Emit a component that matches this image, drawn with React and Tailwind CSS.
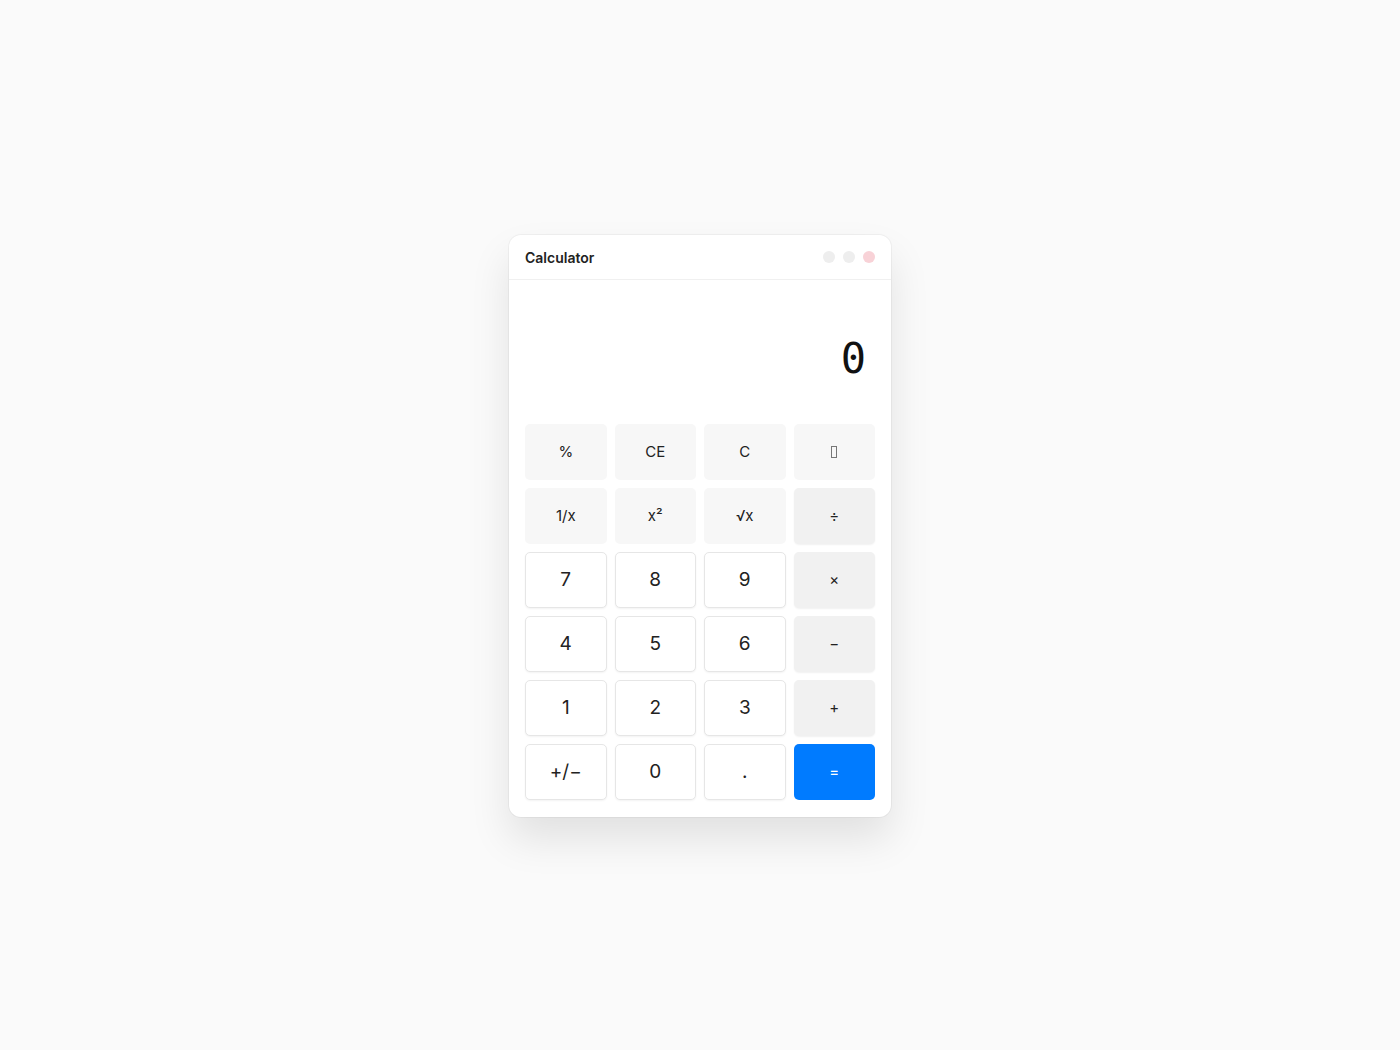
import React from "react";

// Calculator window: title bar, display, 6x4 keypad.
const KEYS = [
  { label: "%", kind: "fn" },
  { label: "CE", kind: "fn" },
  { label: "C", kind: "fn" },
  { label: "back", kind: "fn" },
  { label: "1/x", kind: "fn" },
  { label: "x²", kind: "fn" },
  { label: "√x", kind: "fn" },
  { label: "÷", kind: "op" },
  { label: "7", kind: "num" },
  { label: "8", kind: "num" },
  { label: "9", kind: "num" },
  { label: "×", kind: "op" },
  { label: "4", kind: "num" },
  { label: "5", kind: "num" },
  { label: "6", kind: "num" },
  { label: "−", kind: "op" },
  { label: "1", kind: "num" },
  { label: "2", kind: "num" },
  { label: "3", kind: "num" },
  { label: "+", kind: "op" },
  { label: "+/−", kind: "num" },
  { label: "0", kind: "num" },
  { label: ".", kind: "num" },
  { label: "=", kind: "eq" },
];

const STYLE = {
  fn: "bg-[#f7f7f7] text-[15px] text-[#222]",
  op: "bg-[#f1f1f1] text-[15px] text-[#222] shadow-[0_1px_2px_rgba(0,0,0,0.06)]",
  num: "bg-white border border-[#e6e6e6] text-[19px] text-[#222] shadow-[0_1px_2px_rgba(0,0,0,0.05)]",
  eq: "bg-[#007bff] text-[15px] text-white",
};

function Key({ k }) {
  return (
    <button
      className={`h-[56px] rounded-[5px] flex items-center justify-center ${STYLE[k.kind]}`}
    >
      {k.label === "back" ? (
        <span className="inline-block w-[6px] h-[12px] border border-[#777]" />
      ) : (
        k.label
      )}
    </button>
  );
}

export default function App() {
  return (
    <div
      className="min-h-screen bg-[#fafafa] flex justify-center pt-[235px]"
      style={{ fontFamily: "Inter, 'Noto Sans', sans-serif" }}
    >
      <div className="w-[382px] h-[582px] bg-white rounded-[12px] shadow-[0_0_0_1px_rgba(0,0,0,0.04),0_22px_40px_rgba(0,0,0,0.10)] overflow-hidden flex flex-col">
        {/* title bar */}
        <div className="h-[45px] px-4 flex items-center justify-between border-b border-[#f0f0f0]">
          <span className="text-[14px] font-semibold text-[#222]">Calculator</span>
          <div className="flex gap-2">
            <span className="w-3 h-3 rounded-full bg-[#eeeeee]" />
            <span className="w-3 h-3 rounded-full bg-[#eeeeee]" />
            <span className="w-3 h-3 rounded-full bg-[#f8d2d7]" />
          </div>
        </div>

        {/* display */}
        <div className="h-[128px] pr-[25px] flex items-center justify-end">
          <span
            className="text-[42px] text-[#111] leading-none pt-[29px]"
            style={{ fontFamily: "'DejaVu Sans Mono', monospace" }}
          >
            0
          </span>
        </div>

        {/* keypad */}
        <div className="px-4 pt-[16px] grid grid-cols-4 gap-2">
          {KEYS.map((k, i) => (
            <Key key={i} k={k} />
          ))}
        </div>
      </div>
    </div>
  );
}
